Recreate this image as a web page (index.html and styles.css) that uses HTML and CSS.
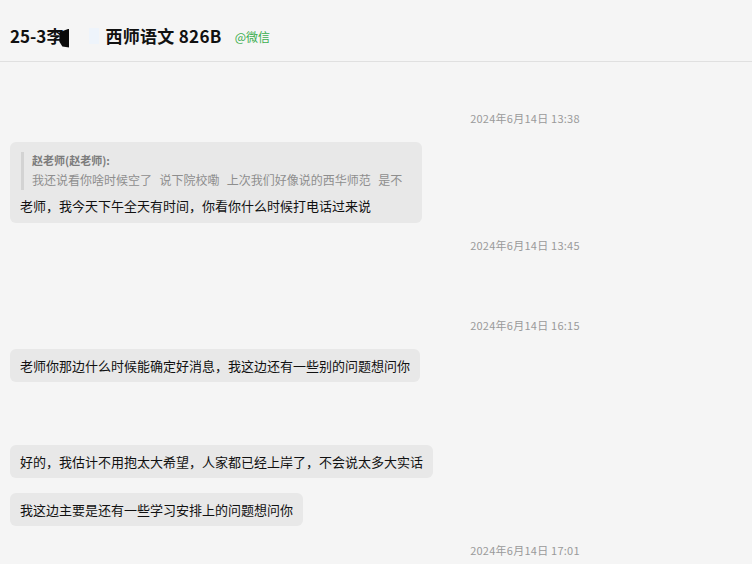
FILE: index.html
```html
<!DOCTYPE html>
<html lang="zh-CN">
<head>
<meta charset="utf-8">
<title>25-3李 西师语文 826B</title>
<link rel="stylesheet" href="styles.css">
</head>
<body>
<header class="header">
  <span class="title">25-3李</span>
  <span class="mask-dark"></span>
  <span class="mask-light"></span>
  <span class="title title-wide">西师语文 826B</span>
  <span class="source">@微信</span>
</header>
<main class="chat">
  <div class="time t1">2024年6月14日 13:38</div>
  <div class="bubble quote-bubble">
    <div class="quote">
      <div class="quote-name">赵老师(赵老师):</div>
      <div class="quote-text">我还说看你啥时候空了&nbsp;&nbsp;说下院校嘞&nbsp;&nbsp;上次我们好像说的西华师范&nbsp;&nbsp;是不</div>
    </div>
    <div class="msg">老师，我今天下午全天有时间，你看你什么时候打电话过来说</div>
  </div>
  <div class="time t2">2024年6月14日 13:45</div>
  <div class="time t3">2024年6月14日 16:15</div>
  <div class="bubble b2"><div class="msg">老师你那边什么时候能确定好消息，我这边还有一些别的问题想问你</div></div>
  <div class="bubble b3"><div class="msg">好的，我估计不用抱太大希望，人家都已经上岸了，不会说太多大实话</div></div>
  <div class="bubble b4"><div class="msg">我这边主要是还有一些学习安排上的问题想问你</div></div>
  <div class="time t4">2024年6月14日 17:01</div>
</main>
</body>
</html>
```
FILE: styles.css
```css
html, body {
  margin: 0;
  padding: 0;
  background: #f5f5f5;
  overflow: hidden;
  font-family: "Noto Sans CJK SC", "Noto Sans", sans-serif;
  color: #1a1a1a;
}
.header {
  height: 62px;
  box-sizing: border-box;
  border-bottom: 1px solid #e0e0e0;
  display: flex;
  align-items: center;
  padding: 10px 0 0 10px;
}
.title {
  font-size: 17px;
  font-weight: 700;
  color: #111;
  line-height: 24px;
}
.title-wide {
  letter-spacing: 0.3px;
}
.mask-dark {
  width: 10px;
  height: 19px;
  background: #0a0a0a;
  margin-left: -4px;
  margin-top: 5px;
  clip-path: polygon(0 20%, 100% 0, 100% 100%, 30% 95%, 0 70%);
}
.mask-light {
  width: 10px;
  height: 16px;
  background: #eef4fb;
  margin-left: 20px;
  margin-right: 6px;
}
.source {
  font-size: 12px;
  color: #3aae4f;
  margin-left: 13px;
  margin-top: 2px;
}
.chat {
  display: flex;
  flex-direction: column;
  align-items: flex-start;
  padding-left: 10px;
}
.time {
  width: 110px;
  margin-left: 460px;
  text-align: center;
  white-space: nowrap;
  font-size: 11px;
  letter-spacing: 0.25px;
  color: #9a9a9a;
  line-height: 16px;
}
.t1 { margin-top: 48px; }
.t2 { margin-top: 14px; }
.t3 { margin-top: 64px; }
.t4 { margin-top: 16px; }
.bubble {
  background: #e8e8e8;
  border-radius: 6px;
  padding: 0 10px;
}
.quote-bubble {
  margin-top: 16px;
  padding-top: 10px;
  padding-bottom: 8px;
  width: 392px;
}
.quote {
  border-left: 3px solid #d3d3d3;
  padding-left: 8px;
  margin-left: 1px;
  margin-bottom: 6px;
}
.quote-name {
  font-size: 11px;
  font-weight: 700;
  color: #7c7c7c;
  line-height: 16px;
}
.quote-text {
  font-size: 12px;
  color: #8e8e8e;
  line-height: 20px;
  white-space: nowrap;
  overflow: hidden;
  word-spacing: 1px;
  margin-top: 2px;
}
.msg {
  font-size: 13px;
  line-height: 19px;
  color: #111;
  white-space: nowrap;
}
.b2, .b3, .b4 {
  padding-top: 7px;
  padding-bottom: 7px;
}
.b2 { margin-top: 16px; }
.b3 { margin-top: 63px; }
.b4 { margin-top: 15px; }
```
